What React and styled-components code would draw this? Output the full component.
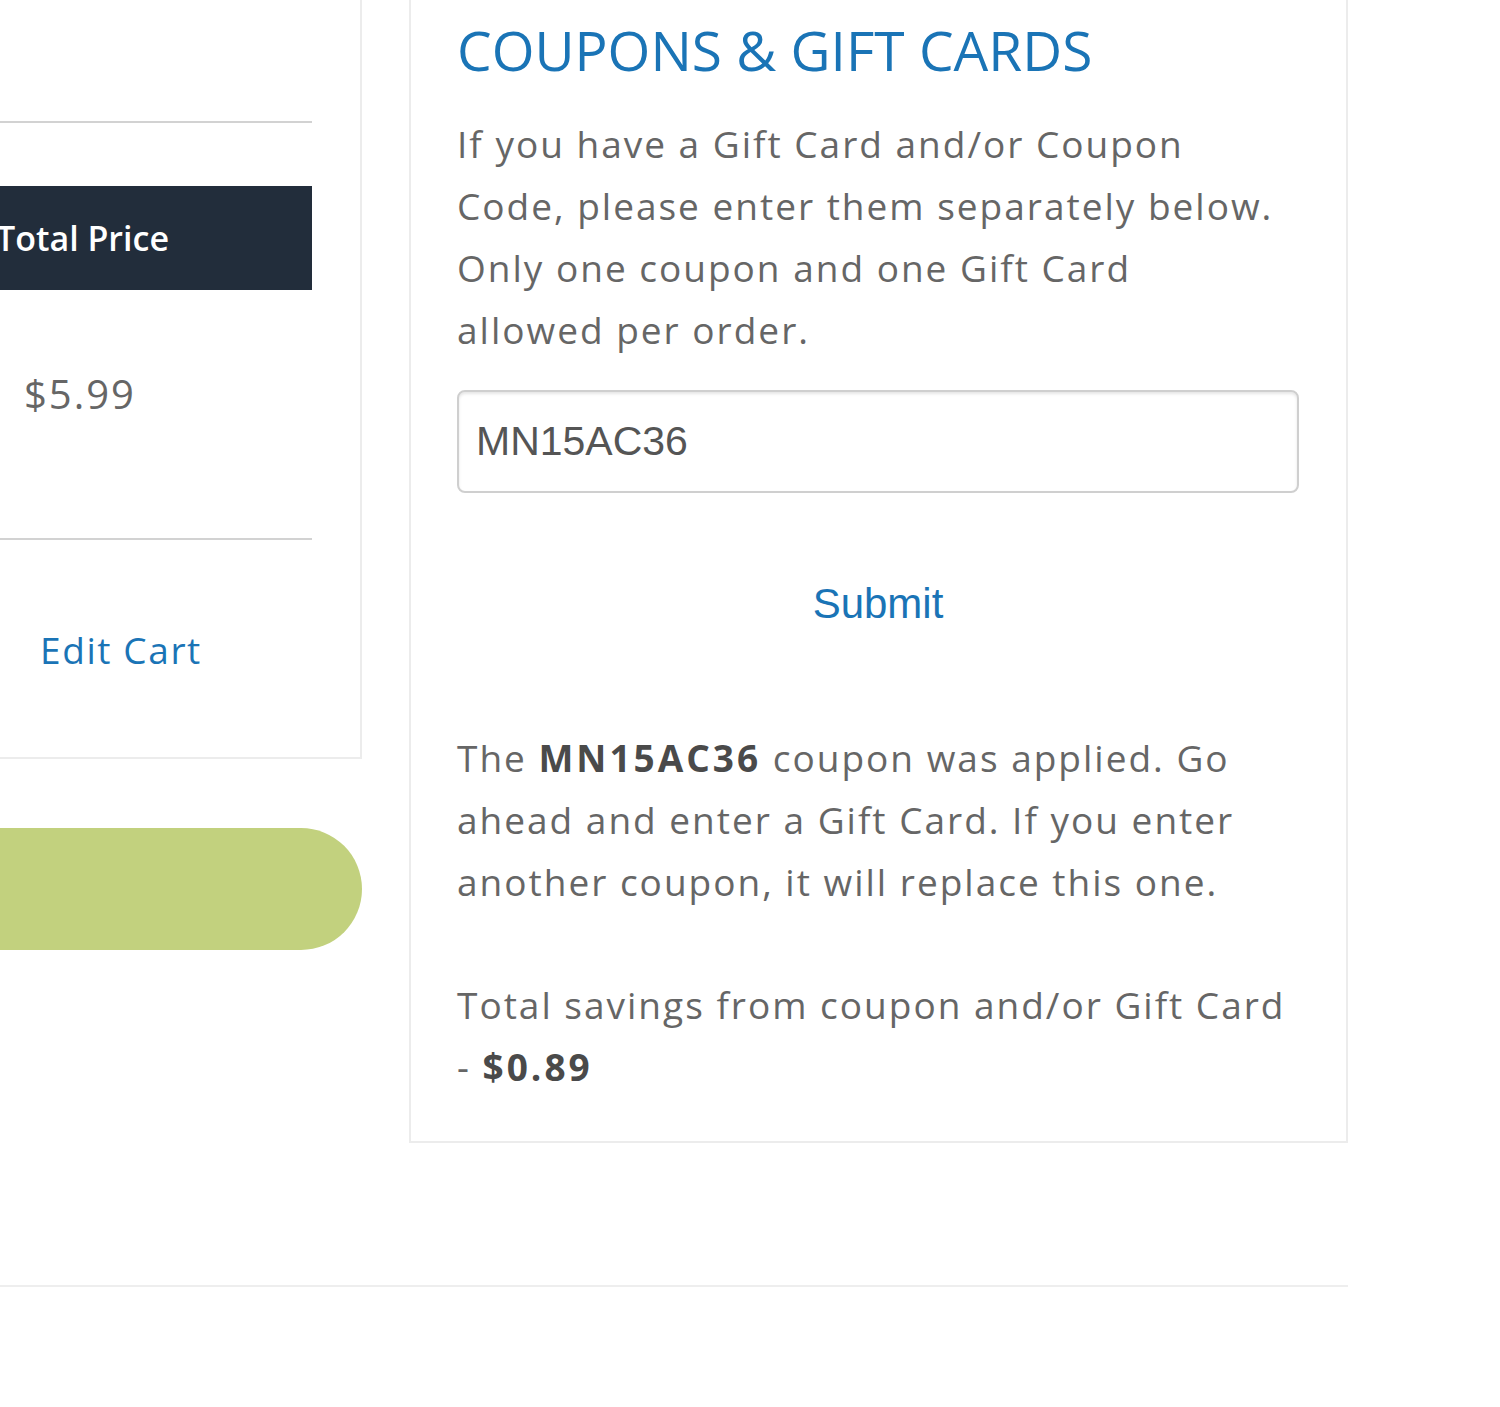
import React from "react";
import styled, { createGlobalStyle } from "styled-components";

const GlobalStyle = createGlobalStyle`
  html, body {
    margin: 0;
    padding: 0;
    background: #fff;
    overflow: hidden;
  }
  body {
    font-family: "Open Sans", Lato, Arial, sans-serif;
    color: #666;
  }
`;

const Page = styled.div`
  width: 1748px;
  margin: -40px 0 0 -400px;
`;

const Columns = styled.div`
  display: grid;
  grid-template-columns: 762px 939px;
  column-gap: 47px;
  align-items: start;
`;

const LeftColumn = styled.div`
  display: flex;
  flex-direction: column;
`;

const CartPanel = styled.div`
  padding: 161px 48px 0 0;
  border-right: 2px solid #ececec;
  border-bottom: 2px solid #ececec;
`;

const Rule = styled.div`
  height: 2px;
  background: #d2d2d2;
`;

const HeaderBar = styled.div`
  display: grid;
  grid-template-columns: 1fr 316px;
  align-items: center;
  height: 104px;
  margin-top: 63px;
  background: #222d3b;
  color: #fff;
  font-weight: 600;
  font-size: 34px;
`;

const CartRow = styled.div`
  display: grid;
  grid-template-columns: 1fr 314px;
  padding: ${(p) => p.$pad};
  line-height: 48px;
  font-size: ${(p) => p.$size || 37}px;
`;

const Cell = styled.div`
  padding-left: ${(p) => p.$indent || 0}px;
  color: ${(p) => p.$color || "inherit"};
  letter-spacing: ${(p) => p.$spacing || 0}px;
`;

const CheckoutPill = styled.div`
  height: 122px;
  margin-top: 69px;
  border-radius: 61px;
  background: #c2d17e;
`;

const CouponPanel = styled.div`
  padding: 59px 47px 43px 46px;
  border: 2px solid #ececec;
  border-top: 0;
`;

const Heading = styled.h2`
  margin: 0;
  font-size: 55px;
  font-weight: 400;
  line-height: 62px;
  color: #1a74b6;
`;

const Text = styled.p`
  max-width: 829px;
  margin: ${(p) => p.$top}px 0 0;
  font-size: 37px;
  line-height: 62px;
  letter-spacing: 2px;
  color: #666;
  strong {
    font-weight: 700;
    color: #4a4a4a;
    letter-spacing: 3px;
  }
`;

const CodeInput = styled.input`
  display: block;
  box-sizing: border-box;
  width: 100%;
  height: 103px;
  margin-top: 29px;
  padding: 0 17px;
  border: 2px solid #cfcfcf;
  border-radius: 8px;
  box-shadow: inset 0 2px 3px rgba(0, 0, 0, 0.1);
  font-family: "Liberation Sans", Arial, sans-serif;
  font-size: 41px;
  color: #555;
  outline: none;
`;

const SubmitButton = styled.button`
  display: block;
  margin: 80px auto 0;
  padding: 0;
  border: 0;
  background: none;
  font-family: "Liberation Sans", Arial, sans-serif;
  font-size: 42px;
  line-height: 62px;
  color: #1a74b6;
  cursor: pointer;
`;

const FooterRule = styled.div`
  height: 2px;
  margin-top: 142px;
  background: #eeeeee;
`;

export default function App() {
  return (
    <>
      <GlobalStyle />
      <Page>
        <Columns>
          <LeftColumn>
            <CartPanel>
              <Rule />
              <HeaderBar>
                <Cell>Item</Cell>
                <Cell>Total Price</Cell>
              </HeaderBar>
              <CartRow $pad="80px 0 120px" $size={40}>
                <Cell />
                <Cell $indent={26} $spacing={2}>
                  $5.99
                </Cell>
              </CartRow>
              <Rule />
              <CartRow $pad="86px 0 83px">
                <Cell />
                <Cell $indent={42} $spacing={1.6} $color="#1a74b6">
                  Edit Cart
                </Cell>
              </CartRow>
            </CartPanel>
            <CheckoutPill />
          </LeftColumn>

          <CouponPanel>
            <Heading>COUPONS &amp; GIFT CARDS</Heading>
            <Text $top={32}>
              If you have a Gift Card and/or Coupon Code, please enter them
              separately below. Only one coupon and one Gift Card allowed per
              order.
            </Text>
            <CodeInput defaultValue="MN15AC36" />
            <SubmitButton type="button">Submit</SubmitButton>
            <Text $top={92}>
              The <strong>MN15AC36</strong> coupon was applied. Go ahead and
              enter a Gift Card. If you enter another coupon, it will replace
              this one.
            </Text>
            <Text $top={61}>
              Total savings from coupon and/or Gift Card - <strong>$0.89</strong>
            </Text>
          </CouponPanel>
        </Columns>
        <FooterRule />
      </Page>
    </>
  );
}
